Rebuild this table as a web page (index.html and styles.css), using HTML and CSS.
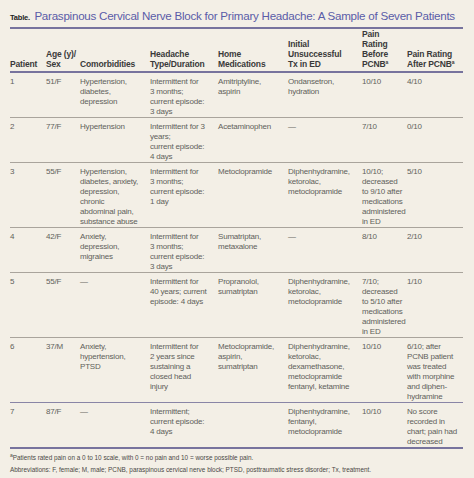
FILE: index.html
```html
<!DOCTYPE html>
<html lang="en">
<head>
<meta charset="utf-8">
<title>Table</title>
<link rel="stylesheet" href="styles.css">
</head>
<body>
<div class="page">
  <div class="title"><span class="lbl">Table.</span> <span class="txt">Paraspinous Cervical Nerve Block for Primary Headache: A Sample of Seven Patients</span></div>
  <table class="tbl">
    <colgroup>
      <col class="c1"><col class="c2"><col class="c3"><col class="c4"><col class="c5"><col class="c6"><col class="c7"><col class="c8">
    </colgroup>
    <thead>
      <tr>
        <th>Patient</th>
        <th>Age (y)/<br>Sex</th>
        <th>Comorbidities</th>
        <th>Headache<br>Type/Duration</th>
        <th>Home<br>Medications</th>
        <th>Initial<br>Unsuccessful<br>Tx in ED</th>
        <th>Pain<br>Rating<br>Before<br>PCNB<sup>a</sup></th>
        <th>Pain Rating<br>After PCNB<sup>a</sup></th>
      </tr>
    </thead>
    <tbody>
      <tr>
        <td>1</td><td>51/F</td><td>Hypertension,<br>diabetes,<br>depression</td><td>Intermittent for<br>3 months;<br>current episode:<br>3 days</td><td>Amitriptyline,<br>aspirin</td><td>Ondansetron,<br>hydration</td><td>10/10</td><td>4/10</td>
      </tr>
      <tr>
        <td>2</td><td>77/F</td><td>Hypertension</td><td>Intermittent for 3<br>years;<br>current episode:<br>4 days</td><td>Acetaminophen</td><td>—</td><td>7/10</td><td>0/10</td>
      </tr>
      <tr>
        <td>3</td><td>55/F</td><td>Hypertension,<br>diabetes, anxiety,<br>depression,<br>chronic<br>abdominal pain,<br>substance abuse</td><td>Intermittent for<br>3 months;<br>current episode:<br>1 day</td><td>Metoclopramide</td><td>Diphenhydramine,<br>ketorolac,<br>metoclopramide</td><td>10/10;<br>decreased<br>to 9/10 after<br>medications<br>administered<br>in ED</td><td>5/10</td>
      </tr>
      <tr>
        <td>4</td><td>42/F</td><td>Anxiety,<br>depression,<br>migraines</td><td>Intermittent for<br>3 months;<br>current episode:<br>3 days</td><td>Sumatriptan,<br>metaxalone</td><td>—</td><td>8/10</td><td>2/10</td>
      </tr>
      <tr>
        <td>5</td><td>55/F</td><td>—</td><td>Intermittent for<br>40 years; current<br>episode: 4 days</td><td>Propranolol,<br>sumatriptan</td><td>Diphenhydramine,<br>ketorolac,<br>metoclopramide</td><td>7/10;<br>decreased<br>to 5/10 after<br>medications<br>administered<br>in ED</td><td>1/10</td>
      </tr>
      <tr class="purple">
        <td>6</td><td>37/M</td><td>Anxiety,<br>hypertension,<br>PTSD</td><td>Intermittent for<br>2 years since<br>sustaining a<br>closed head<br>injury</td><td>Metoclopramide,<br>aspirin,<br>sumatriptan</td><td>Diphenhydramine,<br>ketorolac,<br>dexamethasone,<br>metoclopramide<br>fentanyl, ketamine</td><td>10/10</td><td>6/10; after<br>PCNB patient<br>was treated<br>with morphine<br>and diphen-<br>hydramine</td>
      </tr>
      <tr class="last">
        <td>7</td><td>87/F</td><td>—</td><td>Intermittent;<br>current episode:<br>4 days</td><td></td><td>Diphenhydramine,<br>fentanyl,<br>metoclopramide</td><td>10/10</td><td>No score<br>recorded in<br>chart; pain had<br>decreased</td>
      </tr>
    </tbody>
  </table>
  <div class="notes">
    <p><sup>a</sup>Patients rated pain on a 0 to 10 scale, with 0 = no pain and 10 = worse possible pain.</p>
    <p>Abbreviations: F, female; M, male; PCNB, paraspinous cervical nerve block; PTSD, posttraumatic stress disorder; Tx, treatment.</p>
  </div>
</div>
</body>
</html>
```

FILE: styles.css
```css
html, body {
  margin: 0;
  padding: 0;
  background: #f3efe6;
}
body {
  font-family: "Liberation Sans", Arial, Helvetica, sans-serif;
  width: 474px;
  height: 478px;
  overflow: hidden;
}
.page {
  padding: 7px 11px 0 10px;
}
.title {
  border-bottom: 2px solid #77739d;
  line-height: 15px;
  padding-bottom: 2px;
  white-space: nowrap;
}
.title .lbl {
  font-size: 7.5px;
  font-weight: bold;
  color: #222;
  letter-spacing: -0.2px;
}
.title .txt {
  font-size: 11.6px;
  color: #5a5ca8;
  letter-spacing: -0.25px;
}
.tbl {
  width: 100%;
  border-collapse: collapse;
  table-layout: fixed;
}
.c1 { width: 36px; }
.c2 { width: 34px; }
.c3 { width: 70px; }
.c4 { width: 68px; }
.c5 { width: 70px; }
.c6 { width: 74px; }
.c7 { width: 45px; }
.c8 { width: 56px; }
.tbl th {
  font-size: 8.5px;
  line-height: 10px;
  font-weight: bold;
  color: #3a3a3a;
  letter-spacing: -0.15px;
  text-align: left;
  vertical-align: bottom;
  padding: 0 1px 2px 0;
  border-bottom: 2px solid #77739d;
  white-space: nowrap;
}
.tbl th sup,
.notes sup {
  font-size: 5px;
  vertical-align: 3px;
  line-height: 0;
}
.tbl td {
  font-size: 8px;
  line-height: 10px;
  letter-spacing: -0.2px;
  color: #615f5b;
  text-align: left;
  vertical-align: top;
  padding: 4px 1px 0 0;
  border-bottom: 1px solid #a9a49c;
  white-space: nowrap;
}
.tbl tr.purple td {
  border-bottom: 1px solid #8985a6;
}
.tbl tr.last td {
  border-bottom: 2px solid #77739d;
}
.notes {
  padding-top: 3px;
}
.notes p {
  margin: 0;
  font-size: 6.4px;
  line-height: 12px;
  color: #4a4845;
  white-space: nowrap;
}
```
